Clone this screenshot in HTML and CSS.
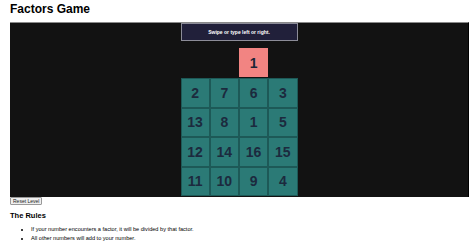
FILE: index.html
```html
<!DOCTYPE html>
<html lang="en">
<head>
  <meta charset="UTF-8">
  <title>Factors Game</title>
  <link rel="stylesheet" href="styles.css">
</head>
<body>
  <h1 class="title">Factors Game</h1>

  <div class="game-area">
    <div class="message-box">Swipe or type left or right.</div>

    <div class="player-row">
      <div class="player-tile">1</div>
    </div>

    <div class="board">
      <div class="cell">2</div><div class="cell">7</div><div class="cell">6</div><div class="cell">3</div>
      <div class="cell">13</div><div class="cell">8</div><div class="cell">1</div><div class="cell">5</div>
      <div class="cell">12</div><div class="cell">14</div><div class="cell">16</div><div class="cell">15</div>
      <div class="cell">11</div><div class="cell">10</div><div class="cell">9</div><div class="cell">4</div>
    </div>
  </div>

  <button class="reset-button">Reset Level</button>

  <h2 class="rules-title">The Rules</h2>
  <ul class="rules-list">
    <li>If your number encounters a factor, it will be divided by that factor.</li>
    <li>All other numbers will add to your number.</li>
  </ul>
</body>
</html>
```

FILE: styles.css
```css
body {
  margin: 0;
  padding: 0 5px 0 10px;
  font-family: "Liberation Sans", Arial, sans-serif;
  color: #000;
  background: #fff;
}
.title {
  margin: 0;
  padding-top: 3px;
  height: 19px;
  font-size: 12px;
  line-height: 12px;
  font-weight: bold;
}
.game-area {
  height: 175px;
  box-sizing: border-box;
  background: #121212;
  border-top: 1px solid #8a8a8a;
  border-right: 1px solid #000;
  display: flex;
  flex-direction: column;
  align-items: center;
}
.message-box {
  width: 117px;
  height: 18px;
  box-sizing: border-box;
  background: #21203a;
  border: 1px solid #8c8c98;
  color: #fff;
  font-size: 5px;
  font-weight: bold;
  display: flex;
  align-items: center;
  justify-content: center;
}
.player-row {
  margin-top: 7px;
  width: 117px;
  display: grid;
  grid-template-columns: repeat(4, 1fr);
}
.player-tile {
  grid-column: 3;
  height: 29px;
  background: #f28482;
  color: #1c2536;
  font-size: 14px;
  font-weight: bold;
  display: flex;
  align-items: center;
  justify-content: center;
}
.board {
  margin-top: 1px;
  width: 117px;
  display: grid;
  grid-template-columns: repeat(4, 1fr);
  grid-auto-rows: 29.5px;
  background: #2b7a76;
}
.cell {
  box-sizing: border-box;
  border: 0.5px solid #1d5957;
  color: #1c2a3e;
  font-size: 14px;
  font-weight: bold;
  display: flex;
  align-items: center;
  justify-content: center;
}
.reset-button {
  display: block;
  margin: 0;
  padding: 0 2px;
  height: 8px;
  font-family: "Liberation Sans", Arial, sans-serif;
  font-size: 5px;
  line-height: 6px;
  color: #222;
  background: #efefef;
  border: 1px solid #999;
  border-radius: 1px;
}
.rules-title {
  margin: 6px 0 0;
  font-size: 7.5px;
  line-height: 9px;
  font-weight: bold;
}
.rules-list {
  margin: 5px 0 0;
  padding-left: 21px;
  font-size: 5.6px;
  line-height: 9px;
}
```
